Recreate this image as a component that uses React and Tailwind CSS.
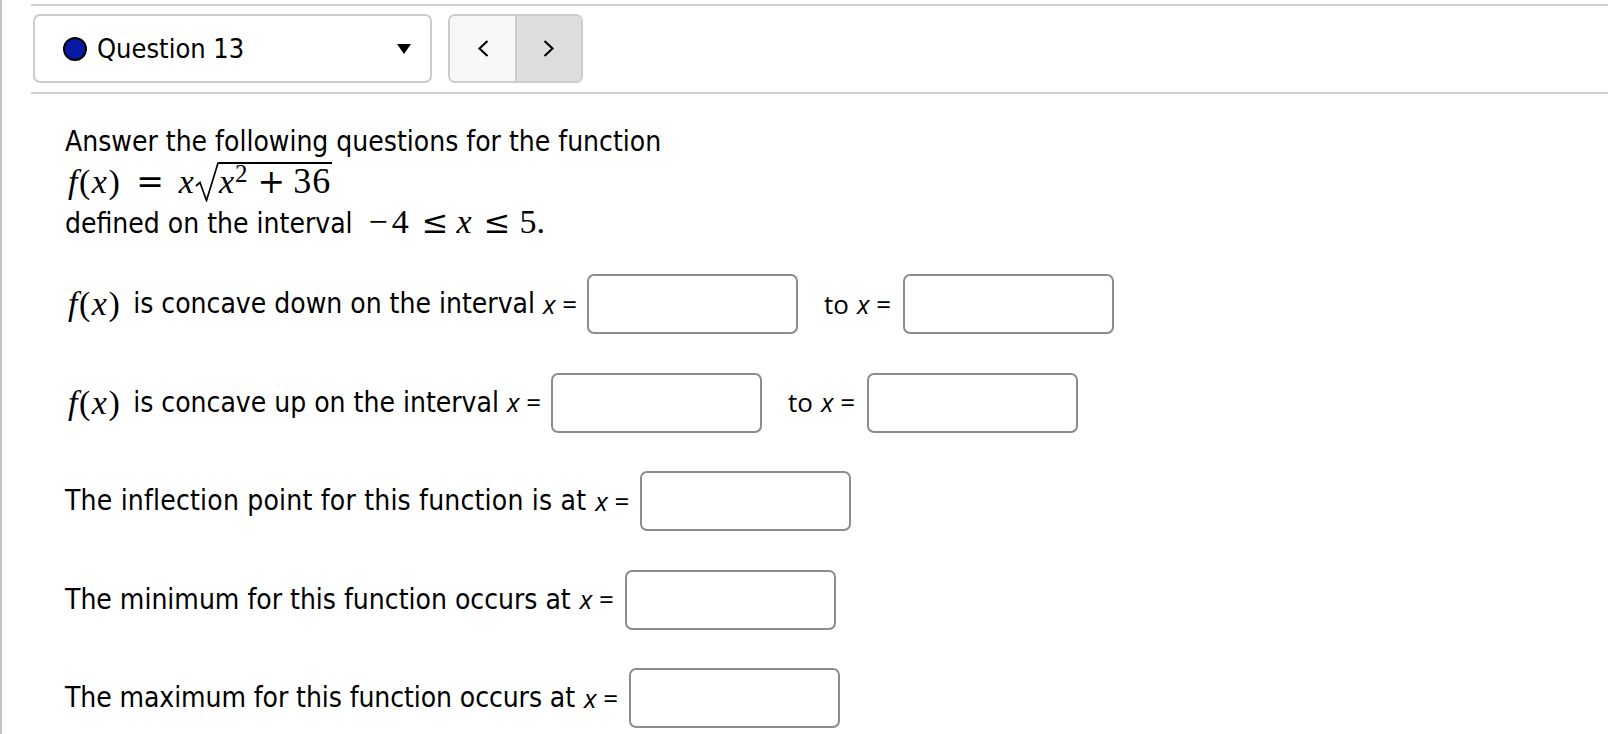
import React from "react";

const TXT = { fontFamily: '"DejaVu Sans Condensed", "DejaVu Sans", Tahoma, sans-serif' };
const MATH = { fontFamily: '"Liberation Serif", "Times New Roman", serif' };
const OP = { fontFamily: '"DejaVu Serif", "Liberation Serif", serif' };
const LBL = { fontFamily: '"Open Sans", "Liberation Sans", sans-serif' };

function Fx() {
  return (
    <span style={MATH} className="text-[34px] leading-[40px] italic tracking-[1.5px] whitespace-nowrap pl-[3px]">
      f<span className="not-italic">(</span>x<span className="not-italic">)</span>
    </span>
  );
}

function Box({ className = "" }) {
  return (
    <div className={`w-[211px] h-[60px] border-2 border-[#8c8c8c] rounded-[7px] bg-white shrink-0 ${className}`} />
  );
}

function XEq({ className = "" }) {
  return (
    <span style={LBL} className={`text-[26px] whitespace-nowrap ${className}`}>
      <i>x</i> =
    </span>
  );
}

function Row({ children }) {
  return <div className="flex items-center h-[60px] whitespace-nowrap">{children}</div>;
}

export default function App() {
  return (
    <div className="w-[1608px] h-[734px] bg-white border-l-2 border-[#c4c4c4] overflow-hidden text-black" style={TXT}>
      <div className="ml-[29px] mt-[4px] border-t-2 border-[#cfcfcf]">
        <div className="flex items-center pt-[8px] pb-[9px] pl-[2px] border-b-2 border-[#cfcfcf]">
          <div className="w-[399px] h-[69px] border-2 border-[#cccccc] rounded-[7px] flex items-center pl-[28px] pr-[19px]">
            <span className="w-[24px] h-[24px] rounded-full bg-[#0a18a6] border-[2.5px] border-black shrink-0" />
            <span className="ml-[10px] text-[27px] leading-none">Question 13</span>
            <svg className="ml-auto" width="14" height="10" viewBox="0 0 14 10">
              <path d="M0 0 H14 L7 10 Z" fill="#000" />
            </svg>
          </div>
          <div className="ml-[16px] w-[135px] h-[69px] border-2 border-[#cccccc] rounded-[7px] flex overflow-hidden">
            <div className="w-[67px] h-full bg-[#f8f8f8] flex items-center justify-center border-r-2 border-[#cccccc]">
              <svg width="12" height="17" viewBox="0 0 12 17">
                <path d="M10.5 1 L2.5 8.5 L10.5 16" fill="none" stroke="#000" strokeWidth="2.1" />
              </svg>
            </div>
            <div className="flex-1 h-full bg-[#dddddd] flex items-center justify-center">
              <svg width="12" height="17" viewBox="0 0 12 17">
                <path d="M1.5 1 L9.5 8.5 L1.5 16" fill="none" stroke="#000" strokeWidth="2.1" />
              </svg>
            </div>
          </div>
        </div>
      </div>

      <div className="pl-[63px] pt-[28px]">
        <div className="text-[28px]">
          <div className="h-[40px] leading-[40px] whitespace-nowrap">Answer the following questions for the function</div>

          <div className="h-[40px] flex items-baseline whitespace-nowrap">
            <Fx />
            <span style={OP} className="text-[33px] leading-[40px] ml-[15px]">=</span>
            <span style={MATH} className="text-[34px] leading-[40px] italic ml-[15px]">x</span>
            <span className="relative inline-block pl-[24px] ml-[1px]">
              <svg className="absolute left-0 top-0" width="24" height="40" viewBox="0 0 24 40">
                <path d="M1 24 L5 20.5 L11.5 38.5 L23 1 H24" fill="none" stroke="#000" strokeWidth="1.7" strokeLinejoin="miter" />
              </svg>
              <span style={MATH} className="inline-block border-t-2 border-black text-[34px] leading-[35px] pr-[1px]">
                <span className="italic">x</span>
                <span className="relative -top-[11px] text-[25px] ml-[1px]">2</span>
                <span style={OP} className="text-[33px] ml-[10px] mr-[8px]">+</span>
                <span className="text-[36px] tracking-[1px]">36</span>
              </span>
            </span>
          </div>

          <div className="h-[40px] flex items-baseline whitespace-nowrap">
            <span className="leading-[40px]">defined on the interval</span>
            <span style={MATH} className="text-[34px] leading-[40px] ml-[16px]">−</span>
            <span style={MATH} className="text-[34px] leading-[40px] ml-[4px]">4</span>
            <span style={OP} className="text-[32px] leading-[40px] ml-[13px]">≤</span>
            <span style={MATH} className="text-[34px] leading-[40px] italic ml-[8px]">x</span>
            <span style={OP} className="text-[32px] leading-[40px] ml-[12px]">≤</span>
            <span style={MATH} className="text-[34px] leading-[40px] ml-[9px]">5.</span>
          </div>
        </div>

        <div className="mt-[32px] flex flex-col gap-[38.6px] text-[28px]">
          <Row>
            <Fx />
            <span className="ml-[12px]">is concave down on the interval</span>
            <XEq className="ml-[8px]" />
            <Box className="ml-[10px]" />
            <span style={LBL} className="text-[26px] ml-[26px]">to</span>
            <XEq className="ml-[8px]" />
            <Box className="ml-[12px]" />
          </Row>
          <Row>
            <Fx />
            <span className="ml-[12px]">is concave up on the interval</span>
            <XEq className="ml-[8px]" />
            <Box className="ml-[10px]" />
            <span style={LBL} className="text-[26px] ml-[26px]">to</span>
            <XEq className="ml-[8px]" />
            <Box className="ml-[12px]" />
          </Row>
          <Row>
            <span className="tracking-[0.2px]">The inflection point for this function is at</span>
            <XEq className="ml-[9px]" />
            <Box className="ml-[11px]" />
          </Row>
          <Row>
            <span>The minimum for this function occurs at</span>
            <XEq className="ml-[9px]" />
            <Box className="ml-[11px]" />
          </Row>
          <Row>
            <span className="tracking-[-0.08px]">The maximum for this function occurs at</span>
            <XEq className="ml-[9px]" />
            <Box className="ml-[11px]" />
          </Row>
        </div>
      </div>
    </div>
  );
}
